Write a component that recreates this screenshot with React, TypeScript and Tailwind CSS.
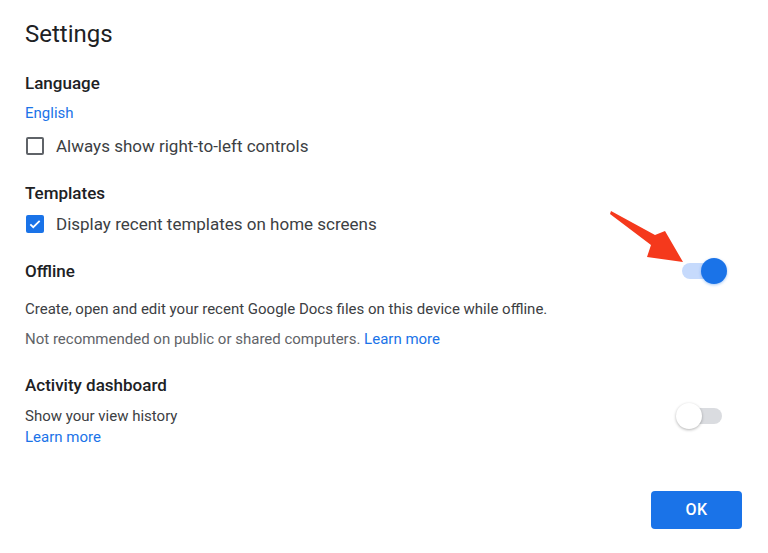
import React from "react";

function Toggle({ on }: { on: boolean }) {
  return (
    <div
      className={
        "relative w-[40px] h-[16px] rounded-full " +
        (on ? "bg-[#c6dafc]" : "bg-[#dadce0]")
      }
    >
      <div
        className={
          "absolute top-[-5px] w-[26px] h-[26px] rounded-full " +
          (on
            ? "right-[-5px] bg-[#1a73e8] shadow-[0_1px_3px_rgba(26,115,232,0.4)]"
            : "left-[-6px] bg-white shadow-[0_1px_3px_rgba(0,0,0,0.3)]")
        }
      />
    </div>
  );
}

export default function App() {
  return (
    <div
      className="relative w-[768px] h-[553px] bg-white overflow-hidden px-[25px] pt-[20px] flex flex-col"
      style={{ fontFamily: "Roboto, 'Liberation Sans', sans-serif" }}
    >
      <div className="text-[24px] leading-[28px] text-[#202124]">Settings</div>

      <div className="mt-[23px] text-[17px] leading-[24px] font-medium text-[#202124]">
        Language
      </div>
      <div className="mt-[8px] text-[15px] leading-[20px] text-[#1a73e8]">English</div>
      <div className="mt-[11px] h-[24px] flex items-center gap-[12px]">
        <div className="w-[18px] h-[18px] ml-[1px] rounded-[2px] border-2 border-[#5f6368]" />
        <span className="text-[17px] leading-[24px] text-[#3c4043]">
          Always show right-to-left controls
        </span>
      </div>

      <div className="mt-[23px] text-[17px] leading-[24px] font-medium text-[#202124]">
        Templates
      </div>
      <div className="mt-[7px] h-[24px] flex items-center gap-[12px]">
        <div className="w-[18px] h-[18px] ml-[1px] rounded-[2px] bg-[#1a73e8] flex items-center justify-center">
          <svg width="14" height="14" viewBox="0 0 24 24">
            <path
              d="M4 12.5l5 5L20 6.5"
              fill="none"
              stroke="white"
              strokeWidth="3"
            />
          </svg>
        </div>
        <span className="text-[17px] leading-[24px] text-[#3c4043]">
          Display recent templates on home screens
        </span>
      </div>

      <div className="mt-[23px] h-[24px] flex items-center justify-between">
        <span className="text-[17px] leading-[24px] font-medium text-[#202124]">Offline</span>
        <div className="mr-[21px]">
          <Toggle on />
        </div>
      </div>
      <div className="mt-[16px] text-[15px] leading-[20px] text-[#3c4043]">
        Create, open and edit your recent Google Docs files on this device while offline.
      </div>
      <div className="mt-[10px] text-[15px] leading-[20px] text-[#5f6368]">
        Not recommended on public or shared computers.{" "}
        <span className="text-[#1a73e8]">Learn more</span>
      </div>

      <div className="mt-[24px] text-[17px] leading-[24px] font-medium text-[#202124]">
        Activity dashboard
      </div>
      <div className="mt-[9px] h-[20px] flex items-center justify-between">
        <span className="text-[15px] leading-[20px] text-[#3c4043]">Show your view history</span>
        <div className="mr-[21px]">
          <Toggle on={false} />
        </div>
      </div>
      <div className="mt-[1px] text-[15px] leading-[20px] text-[#1a73e8]">Learn more</div>

      <div className="mt-auto mb-[24px] flex justify-end pr-[1px]">
        <button className="w-[91px] h-[38px] rounded-[4px] bg-[#1a73e8] text-white text-[16px] font-medium tracking-[0.5px]">
          OK
        </button>
      </div>

      <svg
        className="absolute left-[600px] top-[200px]"
        width="100"
        height="80"
        viewBox="600 200 100 80"
      >
        <polygon
          points="611,211 655,235 665,231 683,262 647,257 651,245 610,214"
          fill="#f5391c"
        />
      </svg>
    </div>
  );
}
